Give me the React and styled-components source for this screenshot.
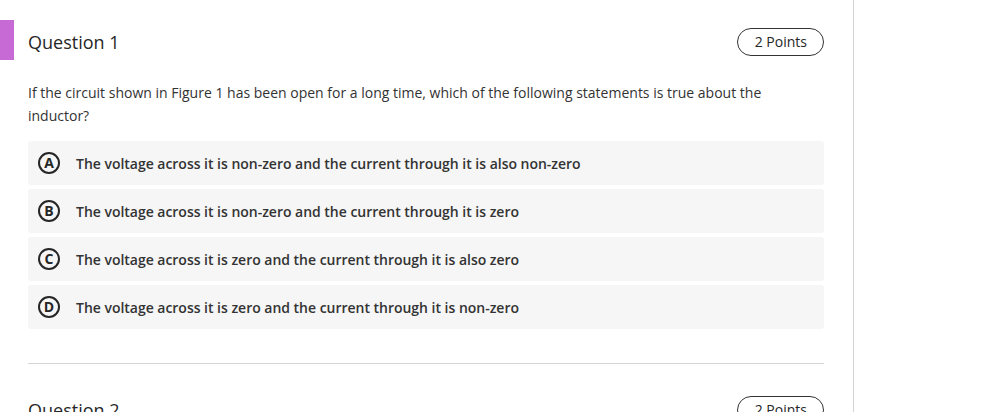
import React from 'react';
import styled, { createGlobalStyle } from 'styled-components';

const GlobalStyle = createGlobalStyle`
  html, body {
    margin: 0;
    padding: 0;
    background: #ffffff;
    font-family: 'Open Sans', 'Noto Sans', sans-serif;
    color: #333333;
  }
`;

const questions = [
  {
    number: 1,
    points: 2,
    active: true,
    text: 'If the circuit shown in Figure 1 has been open for a long time, which of the following statements is true about the inductor?',
    options: [
      { letter: 'A', text: 'The voltage across it is non-zero and the current through it is also non-zero' },
      { letter: 'B', text: 'The voltage across it is non-zero and the current through it is zero' },
      { letter: 'C', text: 'The voltage across it is zero and the current through it is also zero' },
      { letter: 'D', text: 'The voltage across it is zero and the current through it is non-zero' },
    ],
  },
  { number: 2, points: 2, active: false, text: '', options: [] },
];

const Page = styled.div`
  display: flex;
  height: 412px;
  overflow: hidden;
`;

const Main = styled.main`
  width: 854px;
  flex-shrink: 0;
  border-right: 1px solid #d4d4d4;
  box-sizing: border-box;
  padding-top: 20px;
`;

const QuestionRow = styled.section`
  display: flex;
`;

const Marker = styled.div`
  width: 14px;
  height: 40px;
  margin-right: 14px;
  flex-shrink: 0;
  background: ${p => (p.$active ? '#c76ad6' : 'transparent')};
  color: rgba(255, 255, 255, 0.5);
  font-size: 12px;
  line-height: 40px;
  text-indent: -3px;
  overflow: hidden;
`;

const Body = styled.div`
  width: 796px;
`;

const Header = styled.div`
  display: flex;
  align-items: center;
  justify-content: space-between;
  height: 40px;
  padding-top: 2px;
`;

const Title = styled.h2`
  margin: 0;
  font-size: 18px;
  font-weight: 400;
  line-height: 24px;
  color: #262626;
`;

const PointsPill = styled.span`
  box-sizing: border-box;
  height: 28px;
  padding: 0 16px 0 17px;
  border: 1px solid #333333;
  border-radius: 14px;
  font-size: 14px;
  line-height: 26px;
  color: #262626;
`;

const Prompt = styled.p`
  margin: 19px 0 0;
  font-size: 14px;
  line-height: 23px;
  color: #333333;
  padding-right: 50px;
`;

const Options = styled.div`
  display: flex;
  flex-direction: column;
  gap: 4px;
  margin-top: 14px;
`;

const Option = styled.div`
  display: flex;
  align-items: center;
  height: 44px;
  padding-left: 10px;
  border-radius: 3px;
  background: #f6f6f6;
`;

const Letter = styled.span`
  box-sizing: border-box;
  display: inline-flex;
  align-items: center;
  justify-content: center;
  flex-shrink: 0;
  width: 22px;
  height: 22px;
  border: 2px solid #262626;
  border-radius: 50%;
  font-size: 14px;
  font-weight: 700;
  line-height: 1;
  color: #262626;
  margin-right: 16px;
`;

const OptionText = styled.span`
  font-size: 14px;
  font-weight: 600;
  letter-spacing: -0.02px;
  color: #333333;
`;

const Divider = styled.hr`
  margin: 34px 0 24px;
  border: 0;
  border-top: 1px solid #d4d4d4;
`;

const Aside = styled.aside`
  flex: 1;
`;

const App = () => (
  <>
    <GlobalStyle />
    <Page>
      <Main>
        {questions.map((q, i) => (
          <QuestionRow key={q.number}>
            <Marker $active={q.active}>{q.active ? '‹' : ''}</Marker>
            <Body>
              <Header>
                <Title>Question {q.number}</Title>
                <PointsPill>{q.points} Points</PointsPill>
              </Header>
              {q.text && <Prompt>{q.text}</Prompt>}
              {q.options.length > 0 && (
                <Options>
                  {q.options.map(o => (
                    <Option key={o.letter}>
                      <Letter>{o.letter}</Letter>
                      <OptionText>{o.text}</OptionText>
                    </Option>
                  ))}
                </Options>
              )}
              {i < questions.length - 1 && <Divider />}
            </Body>
          </QuestionRow>
        ))}
      </Main>
      <Aside />
    </Page>
  </>
);

export default App;
